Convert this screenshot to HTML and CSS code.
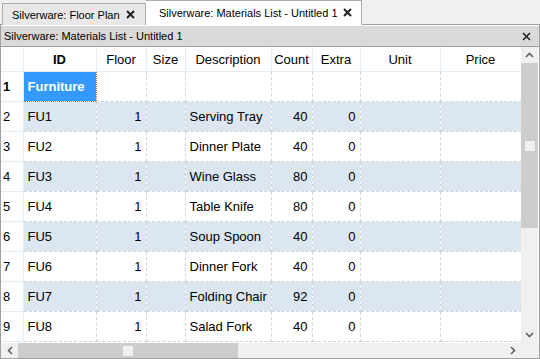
FILE: index.html
```html
<!DOCTYPE html>
<html lang="en">
<head>
  <meta charset="UTF-8">
  <title>Silverware: Materials List</title>
  <link rel="stylesheet" href="styles.css">
</head>
<body>
  <div class="tabs">
    <div class="tab"><span>Silverware: Floor Plan</span><svg class="x" width="9" height="9" viewBox="0 0 9 9"><path d="M1 1L8 8M8 1L1 8" stroke="#222" stroke-width="2"/></svg></div>
    <div class="tab active"><span>Silverware: Materials List - Untitled 1</span><svg class="x" width="9" height="9" viewBox="0 0 9 9"><path d="M1 1L8 8M8 1L1 8" stroke="#222" stroke-width="2"/></svg></div>
    <div class="tab-fill"></div>
  </div>

  <div class="panel">
    <div class="panel-title">
      <span>Silverware: Materials List - Untitled 1</span>
      <svg class="x" width="9" height="9" viewBox="0 0 9 9"><path d="M1 1L8 8M8 1L1 8" stroke="#222" stroke-width="1.6"/></svg>
    </div>

    <div class="sheet">
      <div class="grid-area">
        <table class="grid">
          <colgroup>
            <col style="width:22px"><col style="width:73px"><col style="width:50px">
            <col style="width:39px"><col style="width:86px"><col style="width:41px">
            <col style="width:48px"><col style="width:80px"><col style="width:81px">
          </colgroup>
          <thead>
            <tr>
              <th></th><th class="bold">ID</th><th>Floor</th><th>Size</th><th>Description</th>
              <th>Count</th><th>Extra</th><th>Unit</th><th>Price</th>
            </tr>
          </thead>
          <tbody id="rows">
            <tr>
              <td class="num bold">1</td><td class="group">Furniture</td>
              <td></td><td></td><td></td><td></td><td></td><td></td><td></td>
            </tr>
          </tbody>
        </table>
      </div>
      <div class="vscroll">
        <svg class="arrow" width="9" height="16" viewBox="0 0 9 16"><path d="M1 10L4.5 6.5L8 10" fill="none" stroke="#606060" stroke-width="1.6"/></svg>
        <div class="vthumb"><span class="grip"></span></div>
        <div class="vtrack"></div>
        <svg class="arrow" width="9" height="16" viewBox="0 0 9 16"><path d="M1 6L4.5 9.5L8 6" fill="none" stroke="#606060" stroke-width="1.6"/></svg>
      </div>
    </div>

    <div class="hscroll">
      <svg class="harrow" width="14" height="15" viewBox="0 0 14 15"><path d="M8 4L4.5 7.5L8 11" fill="none" stroke="#606060" stroke-width="1.6"/></svg>
      <div class="hthumb"><span class="grip"></span></div>
      <div class="htrack"></div>
      <svg class="harrow" width="14" height="15" viewBox="0 0 14 15"><path d="M6 4L9.5 7.5L6 11" fill="none" stroke="#606060" stroke-width="1.6"/></svg>
      <span class="corner"></span>
    </div>
  </div>

  <script>
    const items = [
      ["FU1", "Serving Tray", 40],
      ["FU2", "Dinner Plate", 40],
      ["FU3", "Wine Glass", 80],
      ["FU4", "Table Knife", 80],
      ["FU5", "Soup Spoon", 40],
      ["FU6", "Dinner Fork", 40],
      ["FU7", "Folding Chair", 92],
      ["FU8", "Salad Fork", 40]
    ];
    const tbody = document.getElementById("rows");
    items.forEach((item, i) => {
      const tr = document.createElement("tr");
      if (i % 2 === 0) tr.className = "alt";
      tr.innerHTML = `<td class="num">${i + 2}</td><td>${item[0]}</td><td class="r">1</td><td></td>` +
        `<td>${item[1]}</td><td class="r">${item[2]}</td><td class="r">0</td><td></td><td></td>`;
      tbody.appendChild(tr);
    });
  </script>
</body>
</html>
```

FILE: styles.css
```css
body {
  margin: 0;
  background: #f0f0f0;
  font-family: "Liberation Sans", Arial, sans-serif;
  font-size: 13px;
  color: #000;
}
.tabs {
  display: flex;
  height: 25px;
  align-items: flex-end;
  padding-left: 2px;
  border-bottom: 1px solid #a0a0a0;
  box-sizing: border-box;
}
.tab {
  flex: none;
  height: 22px;
  width: 144px;
  padding-left: 9px;
  display: flex;
  align-items: center;
  gap: 6px;
  font-size: 11px;
  white-space: nowrap;
  background: #e8e8e8;
  border: 1px solid #adadad;
  border-bottom: none;
  box-sizing: border-box;
  margin-bottom: -1px;
}
.tab.active {
  height: 25px;
  width: 216px;
  padding-left: 13px;
  gap: 5px;
  background: #fff;
  border-left: none;
  border-bottom: 1px solid #fff;
}
.tab-fill {
  flex: 1;
}
.x {
  flex: none;
}
.panel {
  border: 1px solid #a0a0a0;
  border-top: none;
  height: 334px;
  box-sizing: border-box;
  display: flex;
  flex-direction: column;
  background: #fff;
}
.panel-title {
  height: 20px;
  background: #d9d9d9;
  display: flex;
  justify-content: space-between;
  align-items: center;
  padding: 0 8px 0 3px;
  font-size: 11px;
  border-bottom: 1px solid #a0a0a0;
  margin-top: 1px;
}
.sheet {
  display: flex;
  flex: 1;
  overflow: hidden;
}
.grid-area {
  width: 520px;
  overflow: hidden;
}
.grid {
  table-layout: fixed;
  border-collapse: collapse;
  width: 520px;
}
.grid th {
  height: 24px;
  font-weight: normal;
  font-size: 13px;
  border-right: 1px solid #e3edf8;
  border-bottom: 1px solid #e3edf8;
  padding: 0;
  text-align: center;
}
.grid th.bold {
  font-weight: bold;
}
.grid td {
  height: 29px;
  padding: 0 4px;
  border-right: 1px dashed #d4d4d4;
  border-bottom: 1px dashed #d4d4d4;
  white-space: nowrap;
  overflow: hidden;
}
.grid tr.alt td {
  background: #dce6f0;
}
.grid td.num {
  background: #fff !important;
  border-right: 1px solid #e3edf8;
  border-bottom: 1px solid #e3edf8;
  padding-left: 2px;
}
.grid td.bold {
  font-weight: bold;
}
.grid td.r {
  text-align: right;
}
.grid td.group {
  background: #3399ff;
  color: #fff;
  font-weight: bold;
  border: 1px dotted #c8783a;
}
.vscroll {
  width: 17px;
  background: #f0f0f0;
  display: flex;
  flex-direction: column;
  align-items: center;
}
.arrow {
  flex: none;
}
.vthumb {
  width: 17px;
  height: 165px;
  background: #cdcdcd;
  display: flex;
  align-items: center;
  justify-content: center;
}
.grip {
  width: 10px;
  height: 10px;
  background: #f0f0f0;
}
.vtrack {
  flex: 1;
}
.hscroll {
  height: 15px;
  display: flex;
  align-items: center;
  background: #f0f0f0;
  padding-left: 3px;
}
.harrow {
  flex: none;
}
.hthumb {
  width: 220px;
  height: 15px;
  background: #cdcdcd;
  display: flex;
  align-items: center;
  justify-content: center;
}
.htrack {
  flex: 1;
}
.corner {
  width: 20px;
}
```
